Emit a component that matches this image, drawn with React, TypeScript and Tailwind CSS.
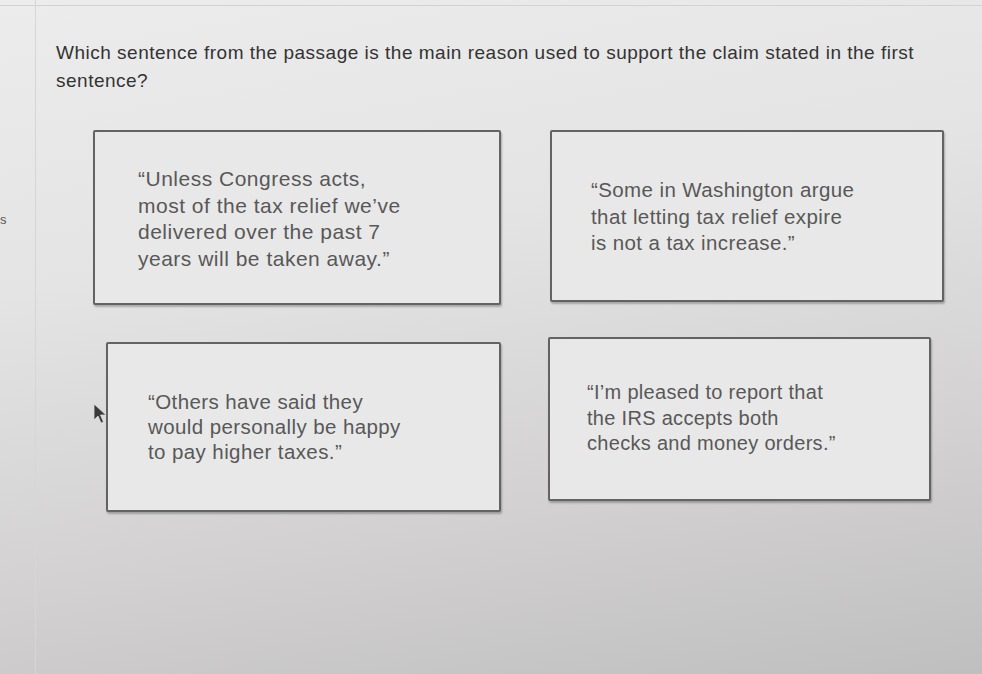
import React from 'react'

type Choice = {
  lines: string[]
  box: string
  text: string
}

const choices: Choice[] = [
  {
    lines: ['\u201cUnless Congress acts,', 'most of the tax relief we\u2019ve', 'delivered over the past 7', 'years will be taken away.\u201d'],
    box: 'w-[408px] h-[175px] pl-[43px] pt-[34px]',
    text: 'text-[21px] leading-[26.5px] tracking-[0.5px]',
  },
  {
    lines: ['\u201cSome in Washington argue', 'that letting tax relief expire', 'is not a tax increase.\u201d'],
    box: 'w-[394px] h-[172px] pl-[39px] pt-[45px]',
    text: 'text-[20.5px] leading-[26.5px] tracking-[0.4px]',
  },
  {
    lines: ['\u201cOthers have said they', 'would personally be happy', 'to pay higher taxes.\u201d'],
    box: 'justify-self-end w-[395px] h-[170px] pl-[40px] pt-[45px]',
    text: 'text-[20.5px] leading-[25px] tracking-[0.4px]',
  },
  {
    lines: ['\u201cI\u2019m pleased to report that', 'the IRS accepts both', 'checks and money orders.\u201d'],
    box: '-ml-[2px] -mt-[5px] w-[383px] h-[164px] pl-[37px] pt-[41px]',
    text: 'text-[20px] leading-[25.5px] tracking-[0.3px]',
  },
]

function ChoiceBox({ choice }: { choice: Choice }) {
  return (
    <div
      className={`border-2 border-[#636363] rounded-[2px] bg-[#e8e8e8] shadow-[1px_2px_2px_rgba(0,0,0,0.25)] text-[#585858] ${choice.box}`}
    >
      <div className={choice.text}>
        {choice.lines.map(line => (
          <div key={line}>{line}</div>
        ))}
      </div>
    </div>
  )
}

function Cursor() {
  return (
    <svg className="absolute left-[93px] top-[403px]" width="14" height="22" viewBox="0 0 14 22">
      <path d="M1 1 L1 17 L5 13 L8 20 L10.5 19 L7.5 12 L13 12 Z" fill="#3a3a3a" stroke="#dcdcdc" strokeWidth="0.8" />
    </svg>
  )
}

export default function App() {
  return (
    <div
      className="relative w-[982px] h-[674px] overflow-hidden bg-[linear-gradient(170deg,#ececec_0%,#e4e4e4_35%,#d3d1d1_70%,#c0bfc0_100%)]"
      style={{ fontFamily: '"Liberation Sans", Arial, sans-serif' }}
    >
      {/* faint screen edges */}
      <div className="absolute left-0 right-0 top-[5px] h-px bg-[#d2d2d2]" />
      <div className="absolute top-0 bottom-0 left-[35px] w-px bg-[#d6d6d6]" />
      <span className="absolute left-0 top-[213px] text-[13px] leading-none text-[#555]">s</span>

      <div className="flex flex-col">
        <p className="pt-[39px] pl-[56px] text-[19px] leading-[28px] text-[#333] tracking-[0.5px]">
          Which sentence from the passage is the main reason used to support the claim stated in the first
          <br />
          sentence?
        </p>

        <div className="grid grid-cols-[408px_394px] gap-x-[49px] gap-y-[37px] pl-[93px] pt-[35px]">
          {choices.map(c => (
            <ChoiceBox key={c.lines[0]} choice={c} />
          ))}
        </div>
      </div>

      <Cursor />
    </div>
  )
}
